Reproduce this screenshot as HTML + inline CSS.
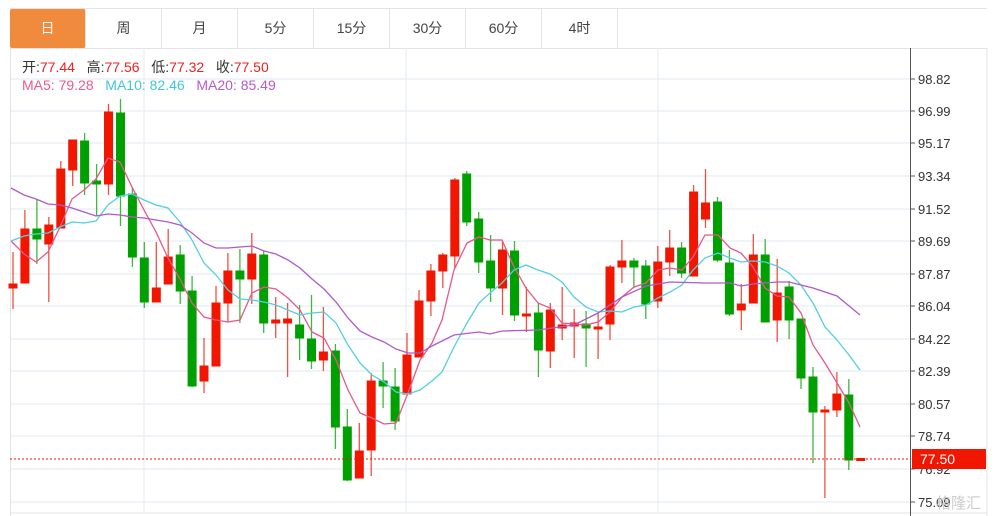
<!DOCTYPE html>
<html><head><meta charset="utf-8"><style>
body{margin:0;width:1000px;height:516px;background:#fff;overflow:hidden;font-family:"Liberation Sans","Noto Sans CJK SC",sans-serif;}
.tabs{position:absolute;left:10px;top:8px;height:39px;width:977px;border-top:1px solid #e3e3e3;border-bottom:1px solid #e3e3e3;}
.tab{position:absolute;top:0;height:39px;width:76px;text-align:center;line-height:39px;font-size:14px;color:#444;border-right:1px solid #e3e3e3;box-sizing:border-box;}
.tab.a{background:#f08a3c;color:#fff;border-radius:2px;}
.info{position:absolute;left:22px;font-size:14px;white-space:pre;}
svg{position:absolute;left:0;top:0;}
.r{fill:#f01600;stroke:#f01600;}
.g{fill:#00a000;stroke:#00a000;}
line.r,line.g{stroke-width:1.3;opacity:.75}
</style></head><body>
<div class="tabs">
<div class="tab a" style="left:0">日</div>
<div class="tab" style="left:76px">周</div>
<div class="tab" style="left:152px">月</div>
<div class="tab" style="left:228px">5分</div>
<div class="tab" style="left:304px">15分</div>
<div class="tab" style="left:380px">30分</div>
<div class="tab" style="left:456px">60分</div>
<div class="tab" style="left:532px">4时</div>
</div>
<svg width="1000" height="516">
<g stroke="#e8eef4" stroke-width="1.2">
<line x1="10" x2="910" y1="79" y2="79"/><line x1="10" x2="910" y1="111" y2="111"/><line x1="10" x2="910" y1="143" y2="143"/><line x1="10" x2="910" y1="176" y2="176"/><line x1="10" x2="910" y1="209" y2="209"/><line x1="10" x2="910" y1="241" y2="241"/><line x1="10" x2="910" y1="274" y2="274"/><line x1="10" x2="910" y1="306" y2="306"/><line x1="10" x2="910" y1="339" y2="339"/><line x1="10" x2="910" y1="371" y2="371"/><line x1="10" x2="910" y1="404" y2="404"/><line x1="10" x2="910" y1="436" y2="436"/><line x1="10" x2="910" y1="469" y2="469"/><line x1="10" x2="910" y1="502" y2="502"/>
<line x1="144" x2="144" y1="48" y2="512"/><line x1="406" x2="406" y1="48" y2="512"/><line x1="658" x2="658" y1="48" y2="512"/>
</g>
<line x1="10.5" x2="10.5" y1="48" y2="516" stroke="#e3e3e3"/>
<line x1="987" x2="987" y1="48" y2="516" stroke="#e3e3e3"/>
<line x1="10" x2="987" y1="513" y2="513" stroke="#e3e3e3"/>
<line x1="910.5" x2="910.5" y1="48" y2="516" stroke="#555"/>
<g id="c">
<line class="r" x1="13" x2="13" y1="252" y2="309"/><rect class="r" x="9" y="284" width="8" height="4"/>
<line class="r" x1="24.9" x2="24.9" y1="210" y2="283"/><rect class="r" x="20.9" y="229" width="8" height="54"/>
<line class="g" x1="36.9" x2="36.9" y1="199" y2="264"/><rect class="g" x="32.9" y="229" width="8" height="10"/>
<line class="r" x1="48.8" x2="48.8" y1="217" y2="302"/><rect class="r" x="44.8" y="225" width="8" height="19"/>
<line class="r" x1="60.8" x2="60.8" y1="161" y2="228"/><rect class="r" x="56.8" y="169" width="8" height="59"/>
<line class="r" x1="72.7" x2="72.7" y1="140" y2="186"/><rect class="r" x="68.7" y="140" width="8" height="30"/>
<line class="g" x1="84.6" x2="84.6" y1="133" y2="195"/><rect class="g" x="80.6" y="141" width="8" height="42"/>
<line class="g" x1="96.6" x2="96.6" y1="164" y2="216"/><rect class="g" x="92.6" y="181" width="8" height="3"/>
<line class="r" x1="108.5" x2="108.5" y1="104" y2="195"/><rect class="r" x="104.5" y="112" width="8" height="72"/>
<line class="g" x1="120.5" x2="120.5" y1="99" y2="226"/><rect class="g" x="116.5" y="113" width="8" height="83"/>
<line class="g" x1="132.4" x2="132.4" y1="187" y2="267"/><rect class="g" x="128.4" y="194" width="8" height="63"/>
<line class="g" x1="144.3" x2="144.3" y1="242" y2="308"/><rect class="g" x="140.3" y="258" width="8" height="44"/>
<line class="r" x1="156.3" x2="156.3" y1="242" y2="302"/><rect class="r" x="152.3" y="288" width="8" height="14"/>
<line class="r" x1="168.2" x2="168.2" y1="229" y2="284"/><rect class="r" x="164.2" y="257" width="8" height="27"/>
<line class="g" x1="180.2" x2="180.2" y1="245" y2="304"/><rect class="g" x="176.2" y="255" width="8" height="36"/>
<line class="g" x1="192.1" x2="192.1" y1="276" y2="387"/><rect class="g" x="188.1" y="291" width="8" height="95"/>
<line class="r" x1="204" x2="204" y1="338" y2="393"/><rect class="r" x="200" y="366" width="8" height="15"/>
<line class="r" x1="216" x2="216" y1="286" y2="366"/><rect class="r" x="212" y="303" width="8" height="63"/>
<line class="r" x1="227.9" x2="227.9" y1="253" y2="322"/><rect class="r" x="223.9" y="271" width="8" height="32"/>
<line class="g" x1="239.9" x2="239.9" y1="249" y2="323"/><rect class="g" x="235.9" y="271" width="8" height="8"/>
<line class="r" x1="251.8" x2="251.8" y1="233" y2="304"/><rect class="r" x="247.8" y="254" width="8" height="25"/>
<line class="g" x1="263.7" x2="263.7" y1="251" y2="333"/><rect class="g" x="259.7" y="255" width="8" height="68"/>
<line class="r" x1="275.7" x2="275.7" y1="297" y2="338"/><rect class="r" x="271.7" y="320" width="8" height="3"/>
<line class="r" x1="287.6" x2="287.6" y1="303" y2="377"/><rect class="r" x="283.6" y="319" width="8" height="4"/>
<line class="g" x1="299.6" x2="299.6" y1="305" y2="360"/><rect class="g" x="295.6" y="325" width="8" height="13"/>
<line class="g" x1="311.5" x2="311.5" y1="295" y2="369"/><rect class="g" x="307.5" y="339" width="8" height="22"/>
<line class="r" x1="323.4" x2="323.4" y1="307" y2="371"/><rect class="r" x="319.4" y="352" width="8" height="8"/>
<line class="g" x1="335.4" x2="335.4" y1="344" y2="449"/><rect class="g" x="331.4" y="351" width="8" height="76"/>
<line class="g" x1="347.3" x2="347.3" y1="409" y2="481"/><rect class="g" x="343.3" y="427" width="8" height="53"/>
<line class="r" x1="359.3" x2="359.3" y1="423" y2="478"/><rect class="r" x="355.3" y="451" width="8" height="27"/>
<line class="r" x1="371.2" x2="371.2" y1="373" y2="476"/><rect class="r" x="367.2" y="381" width="8" height="69"/>
<line class="g" x1="383.1" x2="383.1" y1="362" y2="408"/><rect class="g" x="379.1" y="381" width="8" height="5"/>
<line class="g" x1="395.1" x2="395.1" y1="368" y2="430"/><rect class="g" x="391.1" y="387" width="8" height="34"/>
<line class="r" x1="407" x2="407" y1="333" y2="394"/><rect class="r" x="403" y="355" width="8" height="39"/>
<line class="r" x1="419" x2="419" y1="290" y2="357"/><rect class="r" x="415" y="301" width="8" height="56"/>
<line class="r" x1="430.9" x2="430.9" y1="264" y2="316"/><rect class="r" x="426.9" y="271" width="8" height="30"/>
<line class="r" x1="442.8" x2="442.8" y1="253" y2="288"/><rect class="r" x="438.8" y="255" width="8" height="16"/>
<line class="r" x1="454.8" x2="454.8" y1="178" y2="269"/><rect class="r" x="450.8" y="180" width="8" height="76"/>
<line class="g" x1="466.7" x2="466.7" y1="171" y2="226"/><rect class="g" x="462.7" y="174" width="8" height="48"/>
<line class="g" x1="478.7" x2="478.7" y1="212" y2="273"/><rect class="g" x="474.7" y="219" width="8" height="43"/>
<line class="g" x1="490.6" x2="490.6" y1="235" y2="302"/><rect class="g" x="486.6" y="261" width="8" height="27"/>
<line class="r" x1="502.5" x2="502.5" y1="241" y2="315"/><rect class="r" x="498.5" y="250" width="8" height="38"/>
<line class="g" x1="514.5" x2="514.5" y1="241" y2="321"/><rect class="g" x="510.5" y="251" width="8" height="64"/>
<line class="r" x1="526.4" x2="526.4" y1="287" y2="332"/><rect class="r" x="522.4" y="314" width="8" height="2"/>
<line class="g" x1="538.4" x2="538.4" y1="303" y2="377"/><rect class="g" x="534.4" y="313" width="8" height="37"/>
<line class="r" x1="550.3" x2="550.3" y1="303" y2="368"/><rect class="r" x="546.3" y="310" width="8" height="41"/>
<line class="r" x1="562.2" x2="562.2" y1="287" y2="340"/><rect class="r" x="558.2" y="325" width="8" height="3"/>
<line class="r" x1="574.2" x2="574.2" y1="309" y2="358"/><rect class="r" x="570.2" y="323" width="8" height="3"/>
<line class="g" x1="586.1" x2="586.1" y1="311" y2="367"/><rect class="g" x="582.1" y="324" width="8" height="4"/>
<line class="r" x1="598.1" x2="598.1" y1="313" y2="359"/><rect class="r" x="594.1" y="327" width="8" height="2"/>
<line class="r" x1="610" x2="610" y1="265" y2="340"/><rect class="r" x="606" y="267" width="8" height="57"/>
<line class="r" x1="621.9" x2="621.9" y1="240" y2="283"/><rect class="r" x="617.9" y="261" width="8" height="6"/>
<line class="g" x1="633.9" x2="633.9" y1="258" y2="288"/><rect class="g" x="629.9" y="261" width="8" height="6"/>
<line class="g" x1="645.8" x2="645.8" y1="260" y2="319"/><rect class="g" x="641.8" y="266" width="8" height="38"/>
<line class="r" x1="657.8" x2="657.8" y1="246" y2="308"/><rect class="r" x="653.8" y="262" width="8" height="39"/>
<line class="r" x1="669.7" x2="669.7" y1="230" y2="276"/><rect class="r" x="665.7" y="248" width="8" height="14"/>
<line class="g" x1="681.6" x2="681.6" y1="242" y2="278"/><rect class="g" x="677.6" y="248" width="8" height="25"/>
<line class="r" x1="693.6" x2="693.6" y1="185" y2="276"/><rect class="r" x="689.6" y="192" width="8" height="84"/>
<line class="r" x1="705.5" x2="705.5" y1="169" y2="228"/><rect class="r" x="701.5" y="203" width="8" height="16"/>
<line class="g" x1="717.5" x2="717.5" y1="197" y2="262"/><rect class="g" x="713.5" y="202" width="8" height="58"/>
<line class="g" x1="729.4" x2="729.4" y1="250" y2="316"/><rect class="g" x="725.4" y="263" width="8" height="51"/>
<line class="r" x1="741.3" x2="741.3" y1="284" y2="330"/><rect class="r" x="737.3" y="304" width="8" height="6"/>
<line class="r" x1="753.3" x2="753.3" y1="234" y2="303"/><rect class="r" x="749.3" y="255" width="8" height="48"/>
<line class="g" x1="765.2" x2="765.2" y1="239" y2="322"/><rect class="g" x="761.2" y="255" width="8" height="67"/>
<line class="r" x1="777.2" x2="777.2" y1="259" y2="342"/><rect class="r" x="773.2" y="293" width="8" height="27"/>
<line class="g" x1="789.1" x2="789.1" y1="281" y2="339"/><rect class="g" x="785.1" y="287" width="8" height="33"/>
<line class="g" x1="801" x2="801" y1="319" y2="389"/><rect class="g" x="797" y="319" width="8" height="59"/>
<line class="g" x1="813" x2="813" y1="367" y2="463"/><rect class="g" x="809" y="377" width="8" height="35"/>
<line class="r" x1="824.9" x2="824.9" y1="406" y2="498"/><rect class="r" x="820.9" y="410" width="8" height="2"/>
<line class="r" x1="836.9" x2="836.9" y1="372" y2="417"/><rect class="r" x="832.9" y="394" width="8" height="16"/>
<line class="g" x1="848.8" x2="848.8" y1="379" y2="470"/><rect class="g" x="844.8" y="395" width="8" height="65"/>
<line class="r" x1="860.7" x2="860.7" y1="458" y2="461"/><rect class="r" x="856.7" y="458.5" width="8" height="2"/>
</g>
<g fill="none" stroke-width="1.3">
<polyline stroke="#e8578a" points="11,241 24,254 36,262 48,252 60,227 72,199 84,190 96,179 108,158 120,162 132,187 144,210 156,232 168,258 180,279 192,303 204,317 216,320 228,322 240,320 252,293 264,287 276,289 288,298 300,310 312,332 324,338 336,360 348,390 360,413 372,418 384,424 396,423 408,393 420,360 432,343 442,320 454,270 467,243 479,237 490,240 502,240 514,267 526,288 538,303 550,308 562,323 574,324 586,325 598,322 610,312 622,297 634,287 646,283 658,270 670,268 682,270 693,257 705,235 718,235 730,248 741,253 753,267 765,288 777,296 789,297 801,313 813,345 825,363 837,383 849,403 860,427"/>
<polyline stroke="#52cfe0" points="11,241 24,236 36,234 48,233 60,227 72,222 84,223 96,221 108,205 120,196 132,194 144,200 156,205 168,208 180,222 192,240 204,263 216,275 228,290 240,299 252,300 264,302 276,305 288,310 300,315 312,313 324,312 336,323 348,345 360,363 372,375 384,382 396,392 408,394 420,390 432,381 442,372 454,347 467,323 479,303 490,293 502,283 514,270 526,265 538,270 550,274 562,282 574,297 586,307 598,312 610,311 622,312 634,307 646,305 658,298 670,292 682,285 693,270 705,258 718,253 730,258 741,262 753,261 765,262 777,266 789,273 801,285 813,303 825,327 837,340 849,355 860,370"/>
<polyline stroke="#b159c9" points="11,188 24,195 36,199 48,204 60,205 72,208 84,212 96,216 108,214 120,215 132,217 144,218 156,220 168,222 180,225 192,233 204,243 216,248 228,248 240,247 252,246 264,251 276,254 288,260 300,268 312,279 324,289 336,302 348,318 360,331 372,337 384,342 396,349 408,353 420,353 432,346 454,335 479,332 490,334 502,331 538,330 574,325 598,313 622,297 646,286 670,282 705,283 718,283 730,283 741,286 753,284 777,282 789,282 813,288 837,296 860,315"/>
</g>
<line x1="10" x2="910" y1="459" y2="459" stroke="#f01600" stroke-dasharray="2,2"/>
<g stroke="#555"><line x1="911" x2="915" y1="79" y2="79"/><line x1="911" x2="915" y1="111" y2="111"/><line x1="911" x2="915" y1="143" y2="143"/><line x1="911" x2="915" y1="176" y2="176"/><line x1="911" x2="915" y1="209" y2="209"/><line x1="911" x2="915" y1="241" y2="241"/><line x1="911" x2="915" y1="274" y2="274"/><line x1="911" x2="915" y1="306" y2="306"/><line x1="911" x2="915" y1="339" y2="339"/><line x1="911" x2="915" y1="371" y2="371"/><line x1="911" x2="915" y1="404" y2="404"/><line x1="911" x2="915" y1="436" y2="436"/><line x1="911" x2="915" y1="469" y2="469"/><line x1="911" x2="915" y1="502" y2="502"/></g>
<g font-family="Liberation Sans, sans-serif" font-size="13" fill="#333">
<text x="918" y="84">98.82</text><text x="918" y="116">96.99</text><text x="918" y="148">95.17</text><text x="918" y="181">93.34</text><text x="918" y="214">91.52</text><text x="918" y="246">89.69</text><text x="918" y="279">87.87</text><text x="918" y="311">86.04</text><text x="918" y="344">84.22</text><text x="918" y="376">82.39</text><text x="918" y="409">80.57</text><text x="918" y="441">78.74</text><text x="918" y="474">76.92</text><text x="918" y="507">75.09</text>
</g>
<rect x="912" y="449" width="74" height="20" fill="#f01600"/>
<text x="920" y="464" font-family="Liberation Sans, sans-serif" font-size="14" fill="#fff">77.50</text>
<text x="936" y="508" font-family="Noto Sans CJK SC, sans-serif" font-size="15" fill="#c8c8c8" opacity=".9">格隆汇</text>
</svg>
<div class="info" style="top:57px;color:#333">开:<span style="color:#f02020">77.44</span>   高:<span style="color:#f02020">77.56</span>   低:<span style="color:#f02020">77.32</span>   收:<span style="color:#f02020">77.50</span></div>
<div class="info" style="top:77px"><span style="color:#ec5a8a">MA5: 79.28</span>   <span style="color:#3fc6dc">MA10: 82.46</span>   <span style="color:#b45ccc">MA20: 85.49</span></div>
</body></html>
